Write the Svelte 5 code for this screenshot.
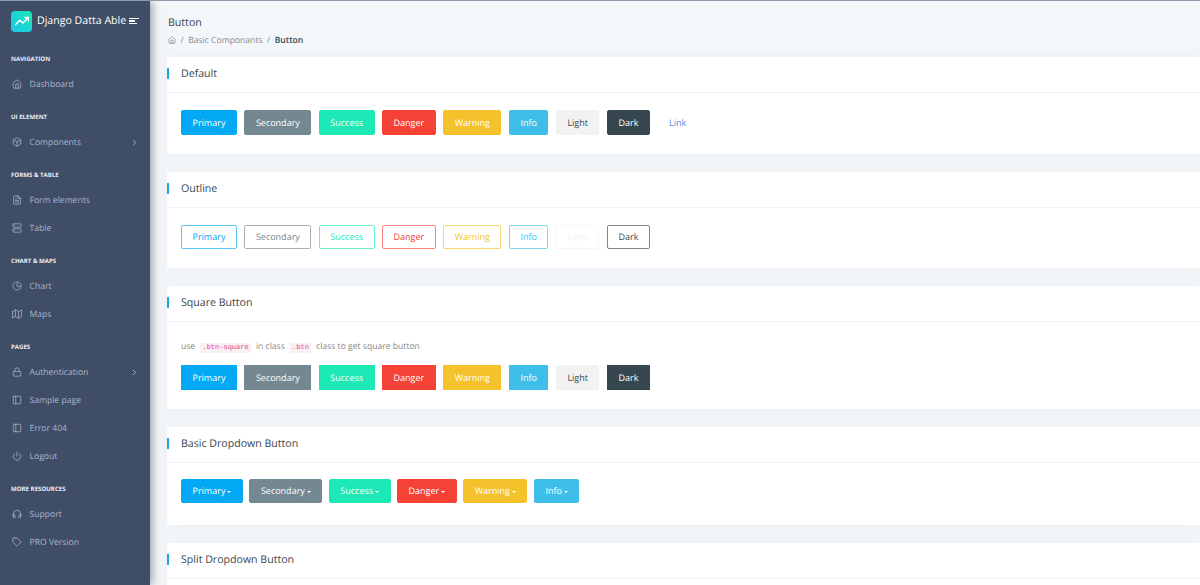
<script lang="ts">
	const icons: Record<string, string> = {
		home: '<path d="M3 9l9-7 9 7v11a2 2 0 0 1-2 2H5a2 2 0 0 1-2-2z"/><polyline points="9 22 9 12 15 12 15 22"/>',
		box: '<path d="M21 16V8a2 2 0 0 0-1-1.73l-7-4a2 2 0 0 0-2 0l-7 4A2 2 0 0 0 3 8v8a2 2 0 0 0 1 1.73l7 4a2 2 0 0 0 2 0l7-4A2 2 0 0 0 21 16z"/><polyline points="3.27 6.96 12 12.01 20.73 6.96"/><line x1="12" y1="22.08" x2="12" y2="12"/>',
		file: '<path d="M14 2H6a2 2 0 0 0-2 2v16a2 2 0 0 0 2 2h12a2 2 0 0 0 2-2V8z"/><polyline points="14 2 14 8 20 8"/><line x1="16" y1="13" x2="8" y2="13"/><line x1="16" y1="17" x2="8" y2="17"/><polyline points="10 9 9 9 8 9"/>',
		server: '<rect x="2" y="2" width="20" height="8" rx="2"/><rect x="2" y="14" width="20" height="8" rx="2"/><line x1="6" y1="6" x2="6.01" y2="6"/><line x1="6" y1="18" x2="6.01" y2="18"/>',
		pie: '<path d="M21.21 15.89A10 10 0 1 1 8 2.83"/><path d="M22 12A10 10 0 0 0 12 2v10z"/>',
		map: '<polygon points="1 6 1 22 8 18 16 22 23 18 23 2 16 6 8 2 1 6"/><line x1="8" y1="2" x2="8" y2="18"/><line x1="16" y1="6" x2="16" y2="22"/>',
		lock: '<rect x="3" y="11" width="18" height="11" rx="2"/><path d="M7 11V7a5 5 0 0 1 10 0v4"/>',
		sidebar: '<rect x="3" y="3" width="18" height="18" rx="2"/><line x1="9" y1="3" x2="9" y2="21"/>',
		power: '<path d="M18.36 6.64a9 9 0 1 1-12.73 0"/><line x1="12" y1="2" x2="12" y2="12"/>',
		headphones: '<path d="M3 18v-6a9 9 0 0 1 18 0v6"/><path d="M21 19a2 2 0 0 1-2 2h-1a2 2 0 0 1-2-2v-3a2 2 0 0 1 2-2h3zM3 19a2 2 0 0 0 2 2h1a2 2 0 0 0 2-2v-3a2 2 0 0 0-2-2H3z"/>',
		tag: '<path d="M20.59 13.41l-7.17 7.17a2 2 0 0 1-2.83 0L2 12V2h10l8.59 8.59a2 2 0 0 1 0 2.82z"/><line x1="7" y1="7" x2="7.01" y2="7"/>',
		chevron: '<polyline points="9 18 15 12 9 6"/>'
	};

	const nav = [
		{ caption: 'Navigation', items: [{ icon: 'home', label: 'Dashboard' }] },
		{ caption: 'UI Element', items: [{ icon: 'box', label: 'Components', more: true }] },
		{
			caption: 'Forms & Table',
			items: [
				{ icon: 'file', label: 'Form elements' },
				{ icon: 'server', label: 'Table' }
			]
		},
		{
			caption: 'Chart & Maps',
			items: [
				{ icon: 'pie', label: 'Chart' },
				{ icon: 'map', label: 'Maps' }
			]
		},
		{
			caption: 'Pages',
			items: [
				{ icon: 'lock', label: 'Authentication', more: true },
				{ icon: 'sidebar', label: 'Sample page' },
				{ icon: 'sidebar', label: 'Error 404' },
				{ icon: 'power', label: 'Logout' }
			]
		},
		{
			caption: 'More Resources',
			items: [
				{ icon: 'headphones', label: 'Support' },
				{ icon: 'tag', label: 'PRO Version' }
			]
		}
	];

	const kinds = ['Primary', 'Secondary', 'Success', 'Danger', 'Warning', 'Info', 'Light', 'Dark'];
</script>

<div class="page">
	<nav class="sidebar">
		<div class="brand">
			<span class="logo">
				<svg viewBox="0 0 24 24" width="14" height="14" fill="none" stroke="#fff" stroke-width="2.4" stroke-linecap="round" stroke-linejoin="round">
					<polyline points="23 6 13.5 15.5 8.5 10.5 1 18" />
					<polyline points="17 6 23 6 23 12" />
				</svg>
			</span>
			<span class="brand-name">Django Datta Able</span>
			<span class="toggle"><i></i><i></i><i></i></span>
		</div>
		{#each nav as group}
			<div class="group">
				<div class="caption">{group.caption}</div>
				{#each group.items as item}
					<div class="item">
						<svg class="icon" viewBox="0 0 24 24" fill="none" stroke="currentColor" stroke-width="2" stroke-linecap="round" stroke-linejoin="round">{@html icons[item.icon]}</svg>
						<span>{item.label}</span>
						{#if item.more}
							<svg class="more" viewBox="0 0 24 24" fill="none" stroke="currentColor" stroke-width="2.5" stroke-linecap="round" stroke-linejoin="round">{@html icons.chevron}</svg>
						{/if}
					</div>
				{/each}
			</div>
		{/each}
	</nav>

	<main class="content">
		<header class="page-head">
			<h1>Button</h1>
			<div class="crumbs">
				<svg viewBox="0 0 24 24" fill="none" stroke="currentColor" stroke-width="2" stroke-linecap="round" stroke-linejoin="round">{@html icons.home}</svg>
				<span class="sep">/</span>
				<span>Basic Componants</span>
				<span class="sep">/</span>
				<strong>Button</strong>
			</div>
		</header>

		<section class="card">
			<h2>Default</h2>
			<div class="body">
				<div class="buttons">
					{#each kinds as kind}
						<button type="button" class="btn {kind.toLowerCase()}">{kind}</button>
					{/each}
					<button type="button" class="btn link">Link</button>
				</div>
			</div>
		</section>

		<section class="card">
			<h2>Outline</h2>
			<div class="body">
				<div class="buttons">
					{#each kinds as kind}
						<button type="button" class="btn outline {kind.toLowerCase()}">{kind}</button>
					{/each}
				</div>
			</div>
		</section>

		<section class="card">
			<h2>Square Button</h2>
			<div class="body">
				<p>use <code>.btn-square</code> in class <code>.btn</code> class to get square button</p>
				<div class="buttons">
					{#each kinds as kind}
						<button type="button" class="btn square {kind.toLowerCase()}">{kind}</button>
					{/each}
				</div>
			</div>
		</section>

		<section class="card">
			<h2>Basic Dropdown Button</h2>
			<div class="body">
				<div class="buttons drop-row">
					{#each kinds.slice(0, 6) as kind}
						<button type="button" class="btn drop {kind.toLowerCase()}">{kind}</button>
					{/each}
				</div>
			</div>
		</section>

		<section class="card">
			<h2>Split Dropdown Button</h2>
			<div class="body"></div>
		</section>
	</main>
</div>

<style>
	:global(body) {
		margin: 0;
		background: #f4f7fa;
	}

	.page {
		display: flex;
		height: 585px;
		overflow: hidden;
		box-sizing: border-box;
		border-top: 1px solid #8f9bab;
		font-family: 'Open Sans', sans-serif;
		text-rendering: geometricPrecision;
		color: #888;
	}

	.sidebar {
		flex: 0 0 150px;
		min-width: 0;
		height: 100%;
		background: #3f4d67;
		color: #a9b7d0;
		box-shadow: 2px 0 9px rgba(63, 77, 103, 0.55);
		position: relative;
		z-index: 2;
	}

	.brand {
		display: flex;
		align-items: center;
		height: 40px;
		margin-bottom: 4px;
		padding-left: 11px;
	}

	.logo {
		display: flex;
		align-items: center;
		justify-content: center;
		width: 21px;
		height: 21px;
		border-radius: 4px;
		background: linear-gradient(-135deg, #1de9b6 0%, #1dc4e9 100%);
	}

	.brand-name {
		margin-left: 5px;
		width: 83px;
		font-size: 10.6px;
		color: #fff;
		white-space: nowrap;
	}

	.toggle {
		display: flex;
		flex-direction: column;
		gap: 1.5px;
		margin-left: 9px;
	}

	.toggle i {
		display: block;
		height: 1.2px;
		width: 10px;
		background: #fff;
	}

	.toggle i:nth-child(2) {
		width: 6px;
	}

	.toggle i:nth-child(3) {
		width: 8px;
	}

	.group {
		padding-bottom: 5px;
	}

	.caption {
		display: flex;
		align-items: center;
		height: 23px;
		padding: 2px 11px 0;
		font-size: 6.1px;
		font-weight: 700;
		text-transform: uppercase;
		color: #e8edf7;
	}

	.item {
		display: flex;
		align-items: center;
		height: 28px;
		padding: 0 11px 0 12px;
		font-size: 8.6px;
	}

	.item .icon {
		width: 10px;
		height: 10px;
		margin-right: 7.5px;
		stroke-width: 1.8;
	}

	.item .more {
		width: 9px;
		height: 9px;
		margin-left: auto;
	}

	.content {
		flex: 1;
		min-width: 0;
		padding-left: 17px;
	}

	.page-head {
		height: 56px;
		box-sizing: border-box;
		padding: 15px 0 0 1px;
	}

	h1 {
		margin: 0;
		font-size: 10.6px;
		line-height: 15px;
		font-weight: 400;
		color: #37474f;
	}

	.crumbs {
		display: flex;
		align-items: center;
		gap: 4.5px;
		margin-top: 2px;
		font-size: 8.6px;
		line-height: 14px;
		color: #888;
	}

	.crumbs svg {
		width: 8px;
		height: 8px;
	}

	.crumbs strong {
		font-weight: 600;
		color: #37474f;
	}

	.card {
		margin-bottom: 18px;
		background: #fff;
		box-shadow: 0 1px 12px rgba(69, 90, 100, 0.06);
	}

	h2 {
		position: relative;
		margin: 0;
		height: 36px;
		box-sizing: border-box;
		padding: 10px 14px 0;
		border-bottom: 1px solid #f1f1f1;
		font-size: 10.6px;
		line-height: 14px;
		font-weight: 400;
		color: #37474f;
	}

	h2::after {
		content: '';
		position: absolute;
		left: 0;
		top: 11px;
		width: 2px;
		height: 11px;
		background: #1da5e3;
	}

	.body {
		padding: 17px 14px 19px;
		min-height: 24px;
	}

	.buttons {
		display: flex;
		gap: 7.5px;
	}

	.drop-row {
		gap: 6.5px;
		margin: -1px 0 3px;
	}

	p {
		margin: 0 0 10px;
		font-size: 8.6px;
		line-height: 14px;
		color: #888;
	}

	code {
		margin: 0 3px;
		padding: 1px 2px;
		border-radius: 1px;
		background: #f8f0f3;
		color: #e83e8c;
		font-family: 'Liberation Mono', monospace;
		font-size: 7px;
	}

	.btn {
		height: 24.5px;
		padding: 0 10.5px;
		border: 1px solid transparent;
		border-radius: 2px;
		font-family: inherit;
		font-size: 9px;
		text-rendering: geometricPrecision;
		color: #fff;
		background: none;
		white-space: nowrap;
	}

	.square {
		border-radius: 0;
	}

	.primary {
		background: #04a9f5;
		border-color: #04a9f5;
	}

	.secondary {
		background: #748892;
		border-color: #748892;
	}

	.success {
		background: #1de9b6;
		border-color: #1de9b6;
	}

	.danger {
		background: #f44236;
		border-color: #f44236;
	}

	.warning {
		background: #f4c22b;
		border-color: #f4c22b;
	}

	.info {
		background: #3ebfea;
		border-color: #3ebfea;
	}

	.light {
		background: #f2f2f2;
		border-color: #f2f2f2;
		color: #37474f;
	}

	.dark {
		background: #37474f;
		border-color: #37474f;
	}

	.link {
		color: #4a8ad8;
	}

	.outline {
		background: none;
		border-color: color-mix(in srgb, currentColor 65%, white);
	}

	.outline.primary {
		color: #04a9f5;
	}

	.outline.secondary {
		color: #748892;
	}

	.outline.success {
		color: #1de9b6;
	}

	.outline.danger {
		color: #f44236;
	}

	.outline.warning {
		color: #f4c22b;
	}

	.outline.info {
		color: #3ebfea;
	}

	.outline.light {
		color: #f2f2f2;
	}

	.outline.dark {
		color: #37474f;
	}

	.drop::after {
		content: '';
		display: inline-block;
		margin-left: 2px;
		vertical-align: 1.5px;
		border-top: 2.4px solid;
		border-left: 2.4px solid transparent;
		border-right: 2.4px solid transparent;
	}
</style>
